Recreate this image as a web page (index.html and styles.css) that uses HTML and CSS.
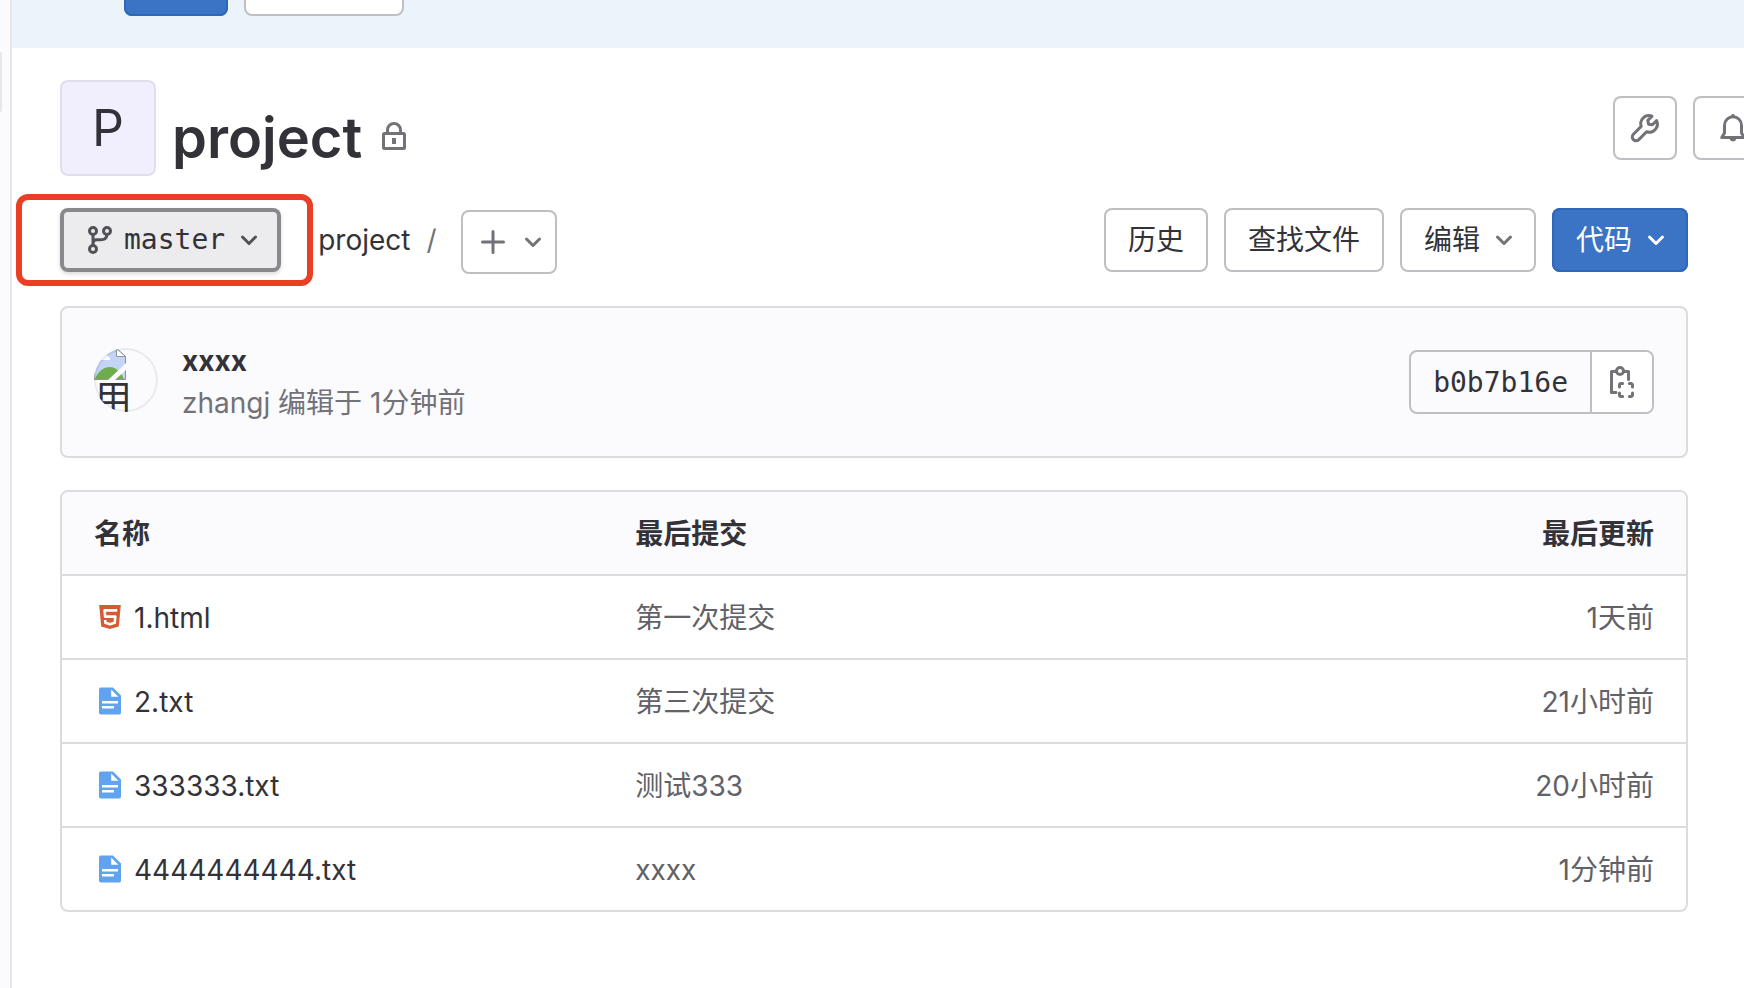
FILE: index.html
```html
<!DOCTYPE html>
<html lang="zh-CN">
<head>
    <meta charset="utf-8">
    <meta name="viewport" content="width=device-width, initial-scale=1.0">
    <title>project</title>
    <link rel="stylesheet" href="styles.css">
</head>
<body>
    <svg class="sprite" aria-hidden="true">
        <symbol id="chevron" viewBox="0 0 16 16">
            <path d="M4.75 6.5 8 9.75l3.25-3.25"/>
        </symbol>
        <symbol id="doc" viewBox="0 0 16 16">
            <path fill="#62a3f0" stroke="none" d="M3.5.75H9.5L13.5 4.7V13.3a1 1 0 0 1-1 1h-9a1 1 0 0 1-1-1V1.75a1 1 0 0 1 1-1z"/>
            <path fill="#fff" stroke="none" d="M8.6 1.7v3.7h3.6zM4 7.5h8v1.3H4zM4 10h6v1.3H4z"/>
        </symbol>
    </svg>

    <div class="sidebar"><div class="sidebar-item"></div></div>

    <main class="main">
        <div class="banner">
            <button class="btn btn-blue banner-main" aria-label="添加"></button>
            <button class="btn banner-other" aria-label="不再显示"></button>
        </div>

        <div class="content">
            <header class="header">
                <div class="avatar">P</div>
                <div class="title">
                    <h1>project</h1>
                    <svg class="icon" viewBox="0 0 16 16"><rect x="2.75" y="6.75" width="10.5" height="7.5" rx=".5"/><path d="M4.75 6.75V5a3.25 3.25 0 0 1 6.5 0v1.75"/><path class="solid" d="M7 9h2v3H7z"/></svg>
                </div>
                <div class="header-actions">
                    <button class="btn btn-icon" aria-label="设置">
                        <svg class="icon" viewBox="0 0 16 16"><path d="M10.9 1.9A4.1 4.1 0 0 0 6.1 7.2L2.2 11.1a1.85 1.85 0 0 0 2.7 2.7L8.8 9.9a4.1 4.1 0 0 0 5-5.6L11.7 6.4 9.8 6.1 9.4 4.2 11.5 2.1z"/></svg>
                    </button>
                    <button class="btn" aria-label="通知">
                        <svg class="icon" viewBox="0 0 16 16"><path d="M3.75 10.5V6.6a4.25 4.25 0 0 1 8.5 0v3.9l1.4 2.25H2.35z"/><path class="solid" d="M7 2.4V2a1 1 0 0 1 2 0v.4zM6.2 13.4h3.6a1.9 1.9 0 0 1-3.6 0z"/></svg>
                    </button>
                </div>
            </header>

            <div class="toolbar">
                <div class="ref">
                    <button class="btn btn-ref">
                        <svg class="icon" viewBox="0 0 16 16"><circle cx="4.5" cy="3.5" r="1.75"/><circle cx="11.5" cy="3.5" r="1.75"/><circle cx="4.5" cy="12.5" r="1.75"/><path d="M4.5 5.25v5.5M4.5 9.7c0-1.2.8-1.8 1.9-1.8h2c1.8 0 2.9-.9 3.1-2.6"/></svg>
                        master
                        <svg class="icon"><use href="#chevron"/></svg>
                    </button>
                    <div class="ref-mark"></div>
                </div>
                <nav class="path">
                    <a href="#">project</a>
                    <span>/</span>
                </nav>
                <button class="btn btn-add" aria-label="添加到目录树">
                    <svg class="icon" viewBox="0 0 16 16"><path d="M8 2.75v10.5M2.75 8h10.5"/></svg>
                    <svg class="icon"><use href="#chevron"/></svg>
                </button>
                <div class="actions">
                    <button class="btn">历史</button>
                    <button class="btn">查找文件</button>
                    <button class="btn btn-drop">编辑<svg class="icon"><use href="#chevron"/></svg></button>
                    <button class="btn btn-drop btn-blue">代码<svg class="icon"><use href="#chevron"/></svg></button>
                </div>
            </div>

            <section class="commit">
                <div class="user">
                    <!-- missing picture -->
                    <svg class="user-img" viewBox="0 0 32 32">
                        <path fill="#c3d4f5" stroke="#8f9296" d="M.5.5h22l9 8v23H.5z"/>
                        <path fill="#fff" d="M7 12a3 3 0 0 1 3-4 4 4 0 0 1 6 3v1z"/>
                        <path fill="#6fac4b" d="M1 31c3-8 9-12 15-12s11 5 14 12z"/>
                        <path fill="#fbfafd" d="M14 32 32 15v7L21 32z"/>
                        <path fill="#fff" stroke="#8f9296" d="M22.500.5v8h9z"/>
                    </svg>
                    <span class="user-alt">用</span>
                </div>
                <div class="commit-text">
                    <strong>xxxx</strong>
                    <div class="muted">zhangj 编辑于 1分钟前</div>
                </div>
                <div class="sha">
                    <span class="sha-text">b0b7b16e</span>
                    <button class="sha-copy" aria-label="复制提交 SHA">
                        <svg class="icon" viewBox="0 0 16 16"><circle cx="7" cy="2.500" r="1.75"/><path d="M5 2.750H2.750v10.500H5M9 2.750h2.250v4"/><path d="M6.750 10.500v-1a.75.75 0 0 1 .75-.75h.8M11.700 8.750h.8a.75.75 0 0 1 .75.75v1M13.250 13.500v1a.75.75 0 0 1-.75.75h-.8M8.300 15.250h-.8a.75.75 0 0 1-.75-.75v-1"/></svg>
                    </button>
                </div>
            </section>

            <div class="files">
                <table>
                    <thead>
                        <tr><th class="name">名称</th><th>最后提交</th><th class="time">最后更新</th></tr>
                    </thead>
                    <tbody>
                        <tr>
                            <td><a class="file" href="#"><svg class="icon" viewBox="0 0 16 16"><path fill="#d65a34" stroke="none" d="M2.600 1.500h10.800l-1 10.700L8 13.500l-4.400-1.300z"/><path stroke="#fff" stroke-width="1.300" stroke-linecap="butt" d="M11.600 4.200H5.300l.25 3.100h5.100l-.3 3.100L8 11.100l-2.300-.7-.1-1.400"/></svg>1.html</a></td>
                            <td>第一次提交</td>
                            <td class="time">1天前</td>
                        </tr>
                        <tr>
                            <td><a class="file" href="#"><svg class="icon"><use href="#doc"/></svg>2.txt</a></td>
                            <td>第三次提交</td>
                            <td class="time">21小时前</td>
                        </tr>
                        <tr>
                            <td><a class="file" href="#"><svg class="icon"><use href="#doc"/></svg>333333.txt</a></td>
                            <td>测试333</td>
                            <td class="time">20小时前</td>
                        </tr>
                        <tr>
                            <td><a class="file" href="#"><svg class="icon"><use href="#doc"/></svg>4444444444.txt</a></td>
                            <td>xxxx</td>
                            <td class="time">1分钟前</td>
                        </tr>
                    </tbody>
                </table>
            </div>
        </div>
    </main>
</body>
</html>
```
FILE: styles.css
```css
* {
    box-sizing: border-box;
}
body {
    margin: 0;
    min-height: 100vh;
    display: flex;
    background: #fff;
    color: #333238;
    font-family: Inter, "Noto Sans CJK SC", sans-serif;
    font-size: 28px;
    line-height: 40px;
}
a {
    color: inherit;
    text-decoration: none;
}
.sprite {
    display: none;
}
.icon {
    width: 32px;
    height: 32px;
    flex: none;
    fill: none;
    stroke: currentColor;
    stroke-width: 1.5;
    stroke-linecap: round;
    stroke-linejoin: round;
    color: #737278;
}
.solid {
    fill: currentColor;
    stroke: none;
}
.sidebar {
    width: 12px;
    flex: none;
    padding-top: 52px;
    background: #fbfafd;
    border-right: 2px solid #e8e7ed;
}
.sidebar-item {
    width: 2px;
    height: 60px;
    background: #e7e7ea;
    border-radius: 0 2px 2px 0;
}
.main {
    flex: 1;
    min-width: 0;
    overflow: hidden;
}

/* buttons */
.btn {
    display: flex;
    align-items: center;
    justify-content: center;
    gap: 8px;
    height: 64px;
    padding: 0 24px;
    background: #fff;
    border: none;
    border-radius: 8px;
    box-shadow: inset 0 0 0 2px #bfbfc3;
    color: #333238;
    font: inherit;
    white-space: nowrap;
    cursor: pointer;
}
.btn-icon {
    padding: 0 16px;
}
.btn-drop {
    padding-right: 16px;
}
.btn-blue {
    background: #3b73c5;
    box-shadow: inset 0 0 0 2px #2f67b9;
    color: #fff;
}
.btn-blue .icon {
    color: #fff;
}

.banner {
    display: flex;
    align-items: flex-start;
    gap: 16px;
    height: 48px;
    padding-left: 112px;
    background: #ebf3fb;
}
.banner .btn {
    margin-top: -48px;
}
.banner-main {
    width: 104px;
}
.banner-other {
    width: 160px;
}

.content {
    padding: 32px 56px 32px 48px;
}
.header {
    display: flex;
    align-items: center;
    gap: 16px;
    margin-right: -85px;
    margin-bottom: 32px;
}
.avatar {
    width: 96px;
    height: 96px;
    flex: none;
    background: #f1effd;
    border: 2px solid #e1dfee;
    border-radius: 8px;
    font-size: 50px;
    line-height: 92px;
    text-align: center;
}
.title {
    display: flex;
    align-items: center;
    gap: 16px;
    padding-top: 16px;
}
h1 {
    margin: 0;
    padding-top: 4px;
    font-size: 56px;
    line-height: 64px;
    font-weight: 600;
}
.header-actions {
    display: flex;
    gap: 16px;
    margin-left: auto;
}

.toolbar {
    display: flex;
    align-items: flex-start;
    margin-bottom: 32px;
}
.ref {
    position: relative;
}
.btn-ref {
    padding-right: 16px;
    background: #ececef;
    box-shadow: inset 0 0 0 4px #89888d, 0 2px 4px rgba(0,0,0,0.15);
    font-family: "DejaVu Sans Mono", monospace;
}
.btn-ref .icon {
    color: #535158;
}
.ref-mark {
    position: absolute;
    left: -44px;
    top: -14px;
    width: 297px;
    height: 92px;
    border: 6px solid #ea3f25;
    border-radius: 12px;
    pointer-events: none;
}
.path {
    display: flex;
    gap: 16px;
    padding: 12px 24px 0 37px;
}
.path span {
    color: #737278;
}
.btn-add {
    margin-top: 2px;
    padding: 0 8px 0 16px;
}
.actions {
    display: flex;
    gap: 16px;
    margin-left: auto;
}

.commit {
    display: flex;
    padding: 32px;
    height: 152px;
    margin-bottom: 32px;
    background: #fbfafd;
    border: 2px solid #dcdcde;
    border-radius: 8px;
}
.user {
    position: relative;
    width: 64px;
    height: 64px;
    flex: none;
    margin: 8px 24px 0 0;
    border-radius: 50%;
    overflow: hidden;
}
.user::after {
    content: "";
    position: absolute;
    inset: 0;
    border: 2px solid rgba(31,30,36,0.08);
    border-radius: 50%;
}
.user-img {
    display: block;
    width: 32px;
    height: 32px;
}
.user-alt {
    display: block;
    font-size: 38px;
    line-height: 36px;
}
.commit-text {
    line-height: 42px;
}
.commit-text strong {
    font-weight: 700;
}
.muted {
    color: #737278;
}
.sha {
    display: flex;
    align-self: flex-start;
    height: 64px;
    margin: 8px 0 0 auto;
    border: 2px solid #bfbfc3;
    border-radius: 8px;
    overflow: hidden;
}
.commit .sha {
    margin-top: 10px;
}
.sha-text {
    padding: 0 22px;
    font-family: "DejaVu Sans Mono", monospace;
    line-height: 62px;
}
.sha-copy {
    width: 62px;
    padding: 0;
    display: flex;
    align-items: center;
    justify-content: center;
    background: #fff;
    border: none;
    border-left: 2px solid #bfbfc3;
    cursor: pointer;
}

.files {
    border: 2px solid #dcdcde;
    border-radius: 8px;
    overflow: hidden;
}
table {
    width: 100%;
    border-collapse: collapse;
    table-layout: fixed;
}
th, td {
    padding: 22px 32px 20px;
    text-align: left;
}
th {
    background: #fbfafd;
    font-weight: 700;
}
td {
    border-top: 2px solid #dcdcde;
    color: #626168;
}
.name {
    width: 33.33%;
}
.time {
    text-align: right;
}
.file {
    display: flex;
    align-items: center;
    gap: 8px;
    color: #333238;
}
```
